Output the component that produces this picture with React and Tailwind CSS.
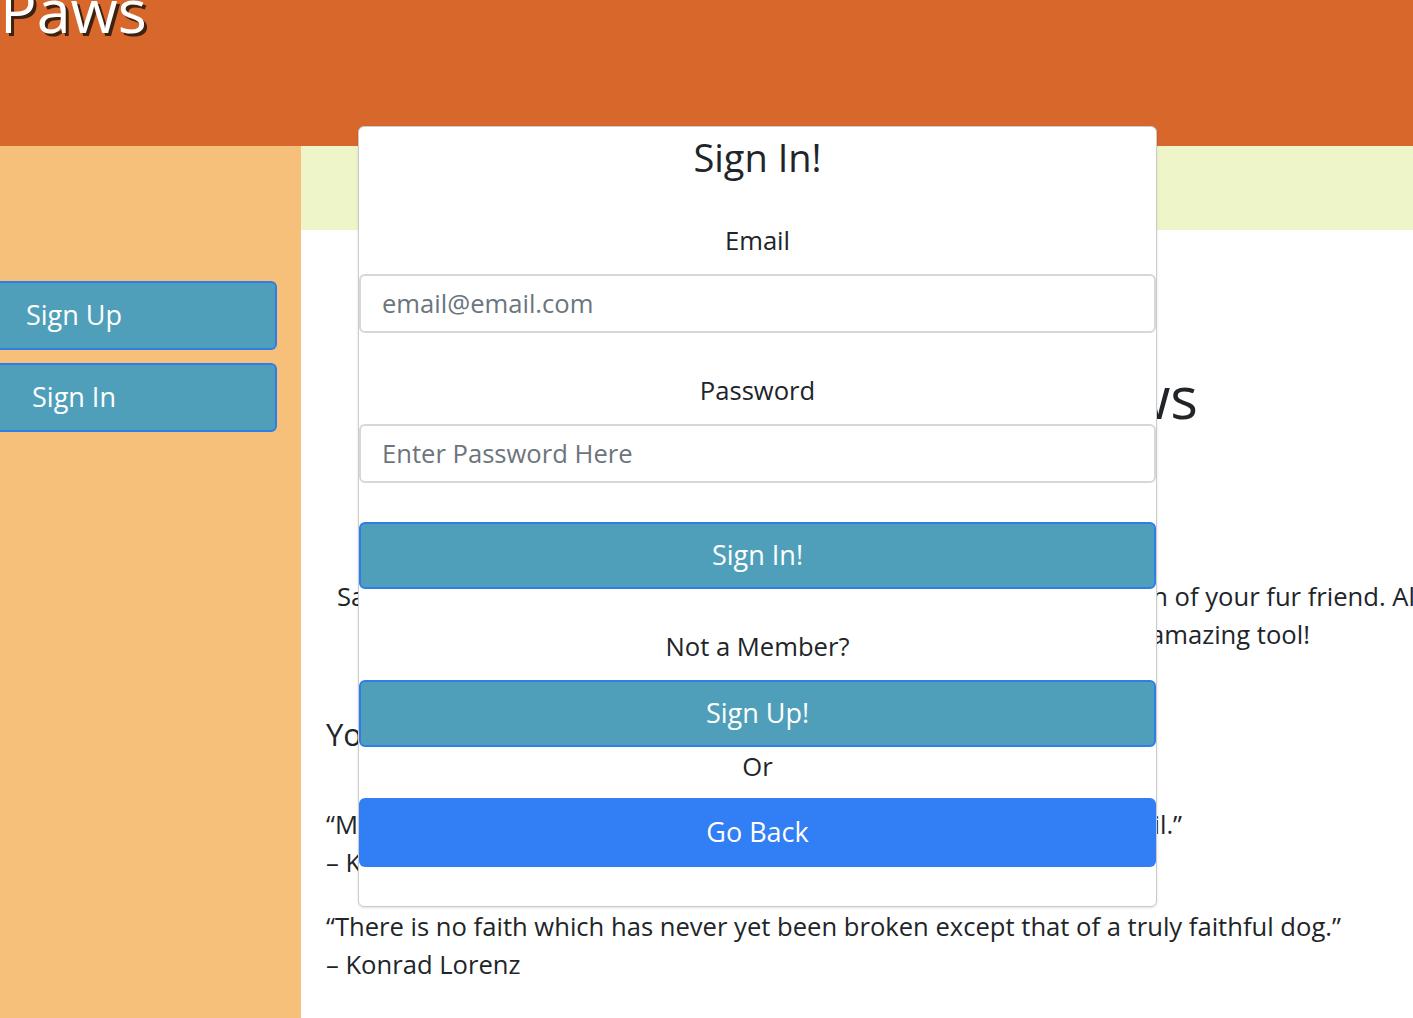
export default function App() {
  return (
    <div className="relative w-[1413px] h-[1018px] overflow-hidden bg-white text-[#212529]" style={{ fontFamily: '"Open Sans", "Liberation Sans", sans-serif' }}>
      {/* header */}
      <header className="h-[146px] overflow-hidden bg-[#d8672b]">
        <h1 className="mt-[-26px] text-[61px] leading-[72px] text-white [text-shadow:3px_3px_0_#3d230f]">Paws</h1>
      </header>

      <div className="flex h-[872px]">
        {/* sidebar */}
        <aside className="w-[301px] shrink-0 bg-[#f6c07a] pt-[135px] flex flex-col gap-[13px]">
          <SideButton label="Sign Up" />
          <SideButton label="Sign In" />
        </aside>

        {/* main */}
        <main className="flex-1 overflow-hidden">
          <div className="h-[84px] bg-[#eef5c9]" />
          <h2 className="mt-[132px] text-right pr-[215px] text-[58px] leading-[69px] font-medium whitespace-nowrap">Welcome to Happy Paws</h2>

          <div className="mt-[147px] text-[25.6px] leading-[38px]">
            <div className="pl-[36px] whitespace-nowrap">Save and keep track of all of the important vet and health information of your fur friend. All in one place with</div>
            <div className="text-right pr-[103px] whitespace-nowrap">this simple and amazing tool!</div>
          </div>

          <div className="pl-[25px]">
            <h3 className="mt-[62px] text-[31px] leading-[37px]">Your Favorite Dog Quotes</h3>
            <Quote text="“Money will buy you a fine dog, but only love can make him wag his tail.”" author="– Kinky Friedman" className="mt-[53px]" />
            <Quote text="“There is no faith which has never yet been broken except that of a truly faithful dog.”" author="– Konrad Lorenz" className="mt-[26px]" />
            <Quote text="“Nobody can fully understand the meaning of love unless he’s owned a dog. A dog can show you more honest affection”" author="– Gene Hill" className="mt-[26px]" />
          </div>
        </main>
      </div>

      {/* sign in modal */}
      <div className="absolute left-[358px] top-[126px] w-[799px] h-[781px] bg-white border border-[#cccccc] rounded-[6px] shadow-sm text-center">
        <h2 className="mt-[8px] text-[38px] leading-[44px]">Sign In!</h2>
        <label className="block mt-[44px] text-[25.6px] leading-[36px]">Email</label>
        <input
          type="text"
          placeholder="email@email.com"
          className="block mt-[15px] w-full h-[59px] px-[21px] border-2 border-[#d4d8dc] rounded-[6px] text-[25.6px] placeholder:text-[#6c757d] outline-none"
        />
        <label className="block mt-[40px] text-[25.6px] leading-[36px]">Password</label>
        <input
          type="password"
          placeholder="Enter Password Here"
          className="block mt-[15px] w-full h-[59px] px-[21px] border-2 border-[#d4d8dc] rounded-[6px] text-[25.6px] placeholder:text-[#6c757d] outline-none"
        />
        <button className="block mt-[39px] w-full h-[67px] bg-[#4f9fbb] border-2 border-[#2f7de9] rounded-[6px] text-white text-[27px]">Sign In!</button>
        <p className="mt-[40px] text-[25.6px] leading-[36px]">Not a Member?</p>
        <button className="block mt-[15px] w-full h-[67px] bg-[#4f9fbb] border-2 border-[#2f7de9] rounded-[6px] text-white text-[27px]">Sign Up!</button>
        <p className="mt-[2px] text-[25.6px] leading-[36px]">Or</p>
        <button className="block mt-[13px] w-full h-[69px] bg-[#317ef5] rounded-[6px] text-white text-[27px]">Go Back</button>
      </div>
    </div>
  )
}

function SideButton({ label }) {
  return (
    <button className="flex items-center w-[277px] h-[69px] bg-[#4f9fbb] border-2 border-l-0 border-[#2f7de9] rounded-r-[6px] text-white text-[27px]">
      <span className="w-[148px] text-center">{label}</span>
    </button>
  )
}

function Quote({ text, author, className }) {
  return (
    <p className={`text-[25.6px] leading-[38px] whitespace-nowrap ${className}`}>
      {text}
      <br />
      {author}
    </p>
  )
}
